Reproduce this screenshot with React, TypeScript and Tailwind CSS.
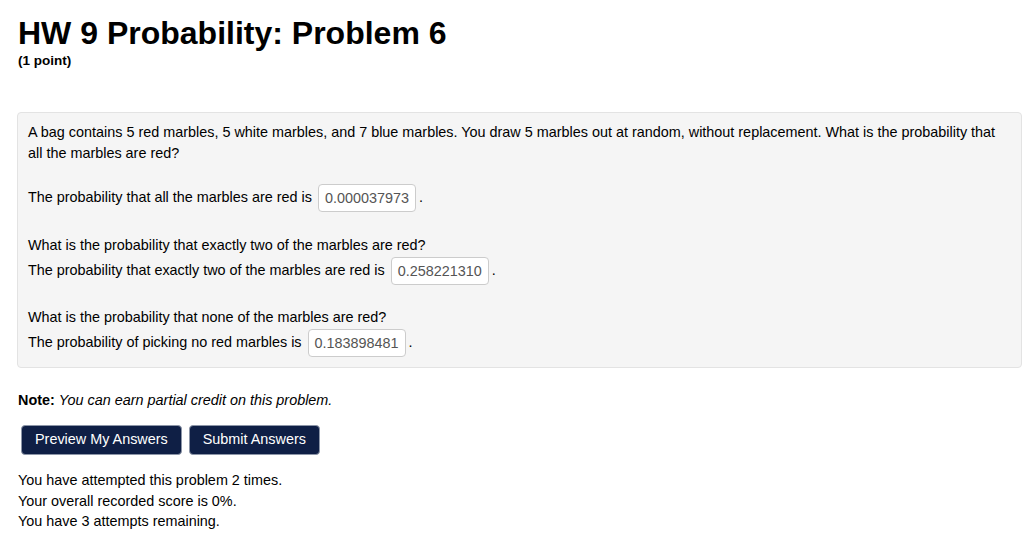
export default function App() {
  const field =
    "inline-block align-middle ml-[6px] mr-[3px] h-[28px] leading-[26px] px-[6px] border border-[#cccccc] rounded-[4px] bg-white text-[#555555] text-[14.4px]";
  return (
    <div className="bg-white min-h-[555px] text-[14.4px] text-black font-['Liberation_Sans',Arial,sans-serif]">
      <div className="pt-[14px] pl-[18px]">
        <h1 className="text-[32px] font-bold leading-[38px]">HW 9 Probability: Problem 6</h1>
        <div className="text-[13.5px] font-bold leading-[18px]">(1 point)</div>
      </div>

      <div className="mt-[42px] ml-[17px] mr-[2px] bg-[#f5f5f5] border border-[#e3e3e3] rounded-[4px] pl-[10px] pr-[10px] pt-[9px] pb-[10px] leading-[21px]">
        <p>
          A bag contains 5 red marbles, 5 white marbles, and 7 blue marbles. You draw 5 marbles out at random, without
          replacement. What is the probability that all the marbles are red?
        </p>
        <p className="mt-[20px]">
          The probability that all the marbles are red is
          <span className={field}>0.000037973</span>.
        </p>
        <p className="mt-[23px]">What is the probability that exactly two of the marbles are red?</p>
        <p className="mt-[1px]">
          The probability that exactly two of the marbles are red is
          <span className={field}>0.258221310</span>.
        </p>
        <p className="mt-[22px]">What is the probability that none of the marbles are red?</p>
        <p className="mt-[1px]">
          The probability of picking no red marbles is
          <span className={field}>0.183898481</span>.
        </p>
      </div>

      <div className="pl-[18px]">
        <p className="mt-[22px] leading-[20px]">
          <b>Note:</b> <i>You can earn partial credit on this problem.</i>
        </p>
        <div className="mt-[15px] flex gap-[7px] pl-[3px]">
          <button className="h-[30px] px-[13px] rounded-[4px] bg-[#0f1f45] border border-[#8d96a8] text-white text-[14.4px]">
            Preview My Answers
          </button>
          <button className="h-[30px] px-[13px] rounded-[4px] bg-[#0f1f45] border border-[#8d96a8] text-white text-[14.4px]">
            Submit Answers
          </button>
        </div>
        <div className="mt-[15px] leading-[20.5px]">
          <p>You have attempted this problem 2 times.</p>
          <p>Your overall recorded score is 0%.</p>
          <p>You have 3 attempts remaining.</p>
        </div>
      </div>
    </div>
  );
}
